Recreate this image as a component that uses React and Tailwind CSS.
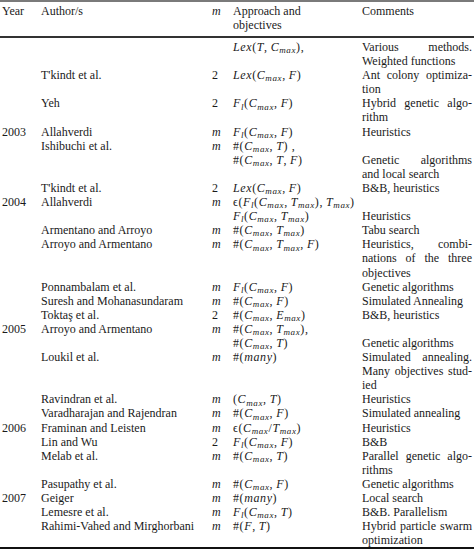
const C = () => (
  <>
    <i>C</i>
    <sub className="text-[9px] italic">max</sub>
  </>
)
const Tm = () => (
  <>
    <i>T</i>
    <sub className="text-[9px] italic">max</sub>
  </>
)
const Em = () => (
  <>
    <i>E</i>
    <sub className="text-[9px] italic">max</sub>
  </>
)
const Fl = () => (
  <>
    <i>F</i>
    <sub className="text-[9px] italic">l</sub>
  </>
)
const cm = ',\u2009'

const rows = [
  ['', '', '', <><i>Lex</i>(<i>T</i>{cm}<C />),</>, 'Various methods.', true],
  ['', '', '', null, 'Weighted functions'],
  ['', "T'kindt et al.", '2', <><i>Lex</i>(<C />{cm}<i>F</i>)</>, 'Ant colony optimiza-', true],
  ['', '', '', null, 'tion'],
  ['', 'Yeh', '2', <><Fl />(<C />{cm}<i>F</i>)</>, 'Hybrid genetic algo-', true],
  ['', '', '', null, 'rithm'],
  ['2003', 'Allahverdi', 'm', <><Fl />(<C />{cm}<i>F</i>)</>, 'Heuristics'],
  ['', 'Ishibuchi et al.', 'm', <>#(<C />{cm}<i>T</i>) ,</>, ''],
  ['', '', '', <>#(<C />{cm}<i>T</i>{cm}<i>F</i>)</>, 'Genetic algorithms', true],
  ['', '', '', null, 'and local search'],
  ['', "T'kindt et al.", '2', <><i>Lex</i>(<C />{cm}<i>F</i>)</>, 'B&B, heuristics'],
  ['2004', 'Allahverdi', 'm', <>ϵ(<Fl />(<C />{cm}<Tm />){cm}<Tm />)</>, ''],
  ['', '', '', <><Fl />(<C />{cm}<Tm />)</>, 'Heuristics'],
  ['', 'Armentano and Arroyo', 'm', <>#(<C />{cm}<Tm />)</>, 'Tabu search'],
  ['', 'Arroyo and Armentano', 'm', <>#(<C />{cm}<Tm />{cm}<i>F</i>)</>, 'Heuristics, combi-', true],
  ['', '', '', null, 'nations of the three', true],
  ['', '', '', null, 'objectives'],
  ['', 'Ponnambalam et al.', 'm', <><Fl />(<C />{cm}<i>F</i>)</>, 'Genetic algorithms'],
  ['', 'Suresh and Mohanasundaram', 'm', <>#(<C />{cm}<i>F</i>)</>, 'Simulated Annealing'],
  ['', 'Toktaş et al.', '2', <>#(<C />{cm}<Em />)</>, 'B&B, heuristics'],
  ['2005', 'Arroyo and Armentano', 'm', <>#(<C />{cm}<Tm />),</>, ''],
  ['', '', '', <>#(<C />{cm}<i>T</i>)</>, 'Genetic algorithms'],
  ['', 'Loukil et al.', 'm', <>#(<i>many</i>)</>, 'Simulated annealing.', true],
  ['', '', '', null, 'Many objectives stud-', true],
  ['', '', '', null, 'ied'],
  ['', 'Ravindran et al.', 'm', <>(<C />{cm}<i>T</i>)</>, 'Heuristics'],
  ['', 'Varadharajan and Rajendran', 'm', <>#(<C />{cm}<i>F</i>)</>, 'Simulated annealing'],
  ['2006', 'Framinan and Leisten', 'm', <>ϵ(<C />/<Tm />)</>, 'Heuristics'],
  ['', 'Lin and Wu', '2', <><Fl />(<C />{cm}<i>F</i>)</>, 'B&B'],
  ['', 'Melab et al.', 'm', <>#(<C />{cm}<i>T</i>)</>, 'Parallel genetic algo-', true],
  ['', '', '', null, 'rithms'],
  ['', 'Pasupathy et al.', 'm', <>#(<C />{cm}<i>F</i>)</>, 'Genetic algorithms'],
  ['2007', 'Geiger', 'm', <>#(<i>many</i>)</>, 'Local search'],
  ['', 'Lemesre et al.', 'm', <><Fl />(<C />{cm}<i>T</i>)</>, 'B&B. Parallelism'],
  ['', 'Rahimi-Vahed and Mirghorbani', 'm', <>#(<i>F</i>{cm}<i>T</i>)</>, 'Hybrid particle swarm', true],
  ['', '', '', null, 'optimization'],
]

const cols = 'grid grid-cols-[39px_171px_21px_129px_110px] whitespace-nowrap'

export default function App() {
  return (
    <div
      className="w-[474px] h-[549px] bg-white text-[#1a1a1a] text-[12px] overflow-hidden"
      style={{ fontFamily: '"Liberation Serif", "Times New Roman", serif' }}
    >
      <div className="h-[2px] bg-[#7a7a7a]" />
      {/* header */}
      <div className={`${cols} pl-[2px] pt-[2px] leading-[14px] h-[32px]`}>
        <div>Year</div>
        <div>Author/s</div>
        <div className="italic">m</div>
        <div>
          <div>Approach and</div>
          <div>objectives</div>
        </div>
        <div>Comments</div>
      </div>
      <div className="h-[2px] mt-[2px] bg-[#333]" />
      {/* body */}
      <div className="pt-[2px]">
        {rows.map(([year, author, m, approach, comment, justify], i) => (
          <div key={i} className={`${cols} pl-[2px] h-[14.1px] leading-[14.1px]`}>
            <div>{year}</div>
            <div>{author}</div>
            <div className={m === 'm' ? 'italic' : ''}>{m}</div>
            <div className="tracking-[0.6px]">{approach}</div>
            <div className={justify ? 'text-justify [text-align-last:justify] whitespace-normal' : ''}>
              {comment}
            </div>
          </div>
        ))}
      </div>
      <div className="h-[4px] bg-[#111]" />
    </div>
  )
}
